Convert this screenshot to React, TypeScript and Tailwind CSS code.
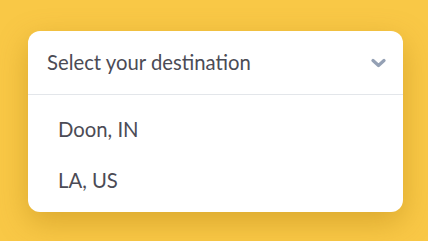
import React from 'react';

const options = ['Doon, IN', 'LA, US'];

const Chevron: React.FC = () => (
  <svg width="15" height="10" viewBox="0 0 15 10" fill="none" className="text-[#94a0b4]">
    <path d="M2 2.5L7.5 7.5L13 2.5" stroke="currentColor" strokeWidth="3.2" strokeLinecap="round" strokeLinejoin="round" />
  </svg>
);

export default function App() {
  return (
    <div
      className="h-[241px] w-[428px] bg-[#f9c846] pl-[28px] pt-[31px]"
      style={{ fontFamily: '"Source Sans Pro", Lato, "Noto Sans", sans-serif' }}
    >
      <div className="w-[375px] rounded-[12px] bg-white shadow-[0_10px_30px_rgba(160,110,0,0.35)]">
        <div className="flex h-[64px] items-center justify-between border-b border-[#e3e6ea] pl-[19px] pr-[17px]">
          <span className="text-[20.3px] text-[#4b4b55]">Select your destination</span>
          <Chevron />
        </div>
        <ul className="pb-[6px] pt-[9px]">
          {options.map(opt => (
            <li key={opt} className="flex h-[51px] items-center pl-[30px] text-[20.3px] text-[#4b4b55]">
              {opt}
            </li>
          ))}
        </ul>
      </div>
    </div>
  );
}
